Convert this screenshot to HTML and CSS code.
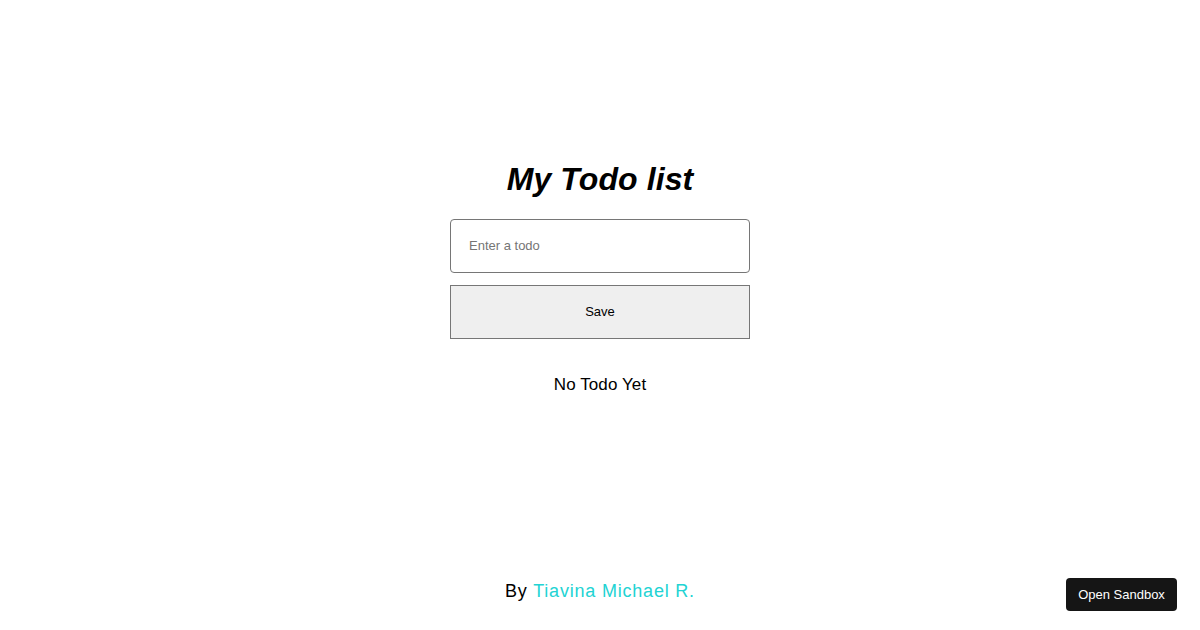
FILE: index.html
```html
<!DOCTYPE html>
<html>
<head>
<meta charset="utf-8">
<link rel="stylesheet" href="styles.css">
</head>
<body>
<div class="page">
  <main class="app">
    <h1 class="title">My Todo list</h1>
    <input class="todo-input" type="text" placeholder="Enter a todo">
    <button class="save-btn">Save</button>
    <p class="empty">No Todo Yet</p>
  </main>
  <footer class="footer">By <a class="author" href="#">Tiavina Michael R.</a></footer>
</div>
<button class="sandbox-btn">Open Sandbox</button>
</body>
</html>
```
FILE: styles.css
```css
html, body {
  margin: 0;
  padding: 0;
  background: #fff;
  font-family: "Liberation Sans", Arial, sans-serif;
  color: #000;
}
.page {
  height: 630px;
  display: flex;
  flex-direction: column;
  align-items: center;
}
.app {
  display: flex;
  flex-direction: column;
  align-items: center;
  padding-top: 160px;
  width: 300px;
}
.title {
  margin: 0;
  font-size: 32px;
  font-style: italic;
  font-weight: bold;
  line-height: 38px;
  letter-spacing: 0.1px;
}
.todo-input {
  box-sizing: border-box;
  margin-top: 21px;
  width: 300px;
  height: 54px;
  border: 1px solid #767676;
  border-radius: 4px;
  padding: 0 18px 2px;
  font-family: "Liberation Sans", Arial, sans-serif;
  font-size: 13px;
  outline: none;
}
.todo-input::placeholder {
  color: #757575;
}
.save-btn {
  box-sizing: border-box;
  margin-top: 12px;
  width: 300px;
  height: 54px;
  background: #efefef;
  border: 1px solid #767676;
  border-radius: 0;
  padding: 0 0 2px;
  font-family: "Liberation Sans", Arial, sans-serif;
  font-size: 13px;
  color: #000;
}
.empty {
  margin: 36px 0 0;
  font-size: 17px;
  line-height: 20px;
  letter-spacing: 0.1px;
}
.footer {
  margin-top: auto;
  margin-bottom: 28px;
  font-size: 18px;
  letter-spacing: 0.8px;
}
.author {
  color: #22d3d3;
  text-decoration: none;
}
.sandbox-btn {
  position: fixed;
  right: 23px;
  bottom: 19px;
  width: 111px;
  height: 33px;
  background: #151515;
  color: #fff;
  border: none;
  border-radius: 4px;
  font-family: "Liberation Sans", Arial, sans-serif;
  font-size: 13px;
  padding: 0;
}
```
